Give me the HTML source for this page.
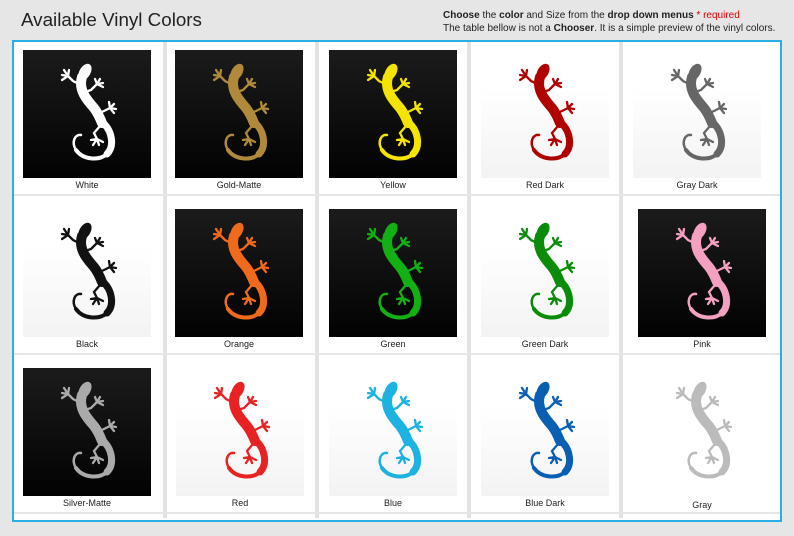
<!DOCTYPE html>
<html><head><meta charset="utf-8"><style>
body{margin:0;width:794px;height:536px;background:#e6e6e6;font-family:"Liberation Sans",sans-serif;position:relative;overflow:hidden}
.t{position:absolute;left:21px;top:9px;font-size:18.8px;color:#222}
.r{position:absolute;left:443px;top:9px;font-size:10px;color:#222;line-height:13px}
.box{position:absolute;left:12px;top:40px;width:766px;height:478px;border:2px solid #2aaee3;background:#fff}
.vs{position:absolute;top:42px;width:4px;height:476px;background:#e2e2e2}
.hs{position:absolute;left:14px;width:766px;height:2px;background:#e6e6e6}
.tile{position:absolute;width:128px;height:128px}
.d{background:linear-gradient(#1b1b1b,#020202)}
.l{background:linear-gradient(#fff 30%,#f3f3f3)}
.lb{position:absolute;width:128px;text-align:center;font-size:9px;color:#222}
</style></head><body>
<svg width="0" height="0" style="position:absolute"><defs>
<g id="g">
<ellipse cx="62" cy="22" rx="5" ry="8.5" transform="rotate(30 62 22)"/>
<g fill="none" stroke-linecap="round">
<path d="M59 27 C55 40 64 50 71 58 C75 63 77 68 79 73" stroke-width="10"/>
<path d="M79 72 C89 80 92 96 84 104" stroke-width="7"/>
<path d="M84 104 C76 111 60 110 53 100" stroke-width="4"/>
<path d="M53 100 C48 92 52 84 58 85" stroke-width="2.5"/>
<g stroke-width="2.3">
<path d="M56 34 L50 31 L45 26"/><path d="M45 26 L39 25 M45 26 L41 20 M45 26 L46 20 M45 26 L39 30"/>
<path d="M62 42 L68 40 L74 34"/><path d="M74 34 L72 29 M74 34 L77 29 M74 34 L80 33 M74 34 L80 37"/>
<path d="M74 64 L81 61 L87 58"/><path d="M87 58 L86 52 M87 58 L91 54 M87 58 L93 59 M87 58 L91 63"/>
<path d="M77 76 L71 83 L74 89"/><path d="M74 89 L68 90 M74 89 L70 95 M74 89 L76 95 M74 89 L80 92"/>
</g></g></g></defs></svg>
<div class="t">Available Vinyl Colors</div>
<div class="r"><b>Choose</b> the <b>color</b> and Size from the <b>drop down menus</b> <span style="color:#d00">* required</span><br>The table bellow is not a <b>Chooser</b>. It is a simple preview of the vinyl colors.</div>
<div class="box"></div>
<div class="vs" style="left:163px"></div><div class="vs" style="left:315px"></div><div class="vs" style="left:467px"></div><div class="vs" style="left:619px"></div>
<div class="hs" style="top:194px"></div><div class="hs" style="top:353px"></div><div class="hs" style="top:512px"></div>

<div class="tile d" style="left:23px;top:50px"><svg width="128" height="128" fill="#fff" stroke="#fff"><use href="#g"/></svg></div>
<div class="lb" style="left:23px;top:180px">White</div>
<div class="tile d" style="left:175px;top:50px"><svg width="128" height="128" fill="#b08a3a" stroke="#b08a3a"><use href="#g"/></svg></div>
<div class="lb" style="left:175px;top:180px">Gold-Matte</div>
<div class="tile d" style="left:329px;top:50px"><svg width="128" height="128" fill="#f5e400" stroke="#f5e400"><use href="#g"/></svg></div>
<div class="lb" style="left:329px;top:180px">Yellow</div>
<div class="tile l" style="left:481px;top:50px"><svg width="128" height="128" fill="#b00000" stroke="#b00000"><use href="#g"/></svg></div>
<div class="lb" style="left:481px;top:180px">Red Dark</div>
<div class="tile l" style="left:633px;top:50px"><svg width="128" height="128" fill="#666" stroke="#666"><use href="#g"/></svg></div>
<div class="lb" style="left:633px;top:180px">Gray Dark</div>

<div class="tile l" style="left:23px;top:209px"><svg width="128" height="128" fill="#111" stroke="#111"><use href="#g"/></svg></div>
<div class="lb" style="left:23px;top:339px">Black</div>
<div class="tile d" style="left:175px;top:209px"><svg width="128" height="128" fill="#f06a1c" stroke="#f06a1c"><use href="#g"/></svg></div>
<div class="lb" style="left:175px;top:339px">Orange</div>
<div class="tile d" style="left:329px;top:209px"><svg width="128" height="128" fill="#12b012" stroke="#12b012"><use href="#g"/></svg></div>
<div class="lb" style="left:329px;top:339px">Green</div>
<div class="tile l" style="left:481px;top:209px"><svg width="128" height="128" fill="#0a8c0a" stroke="#0a8c0a"><use href="#g"/></svg></div>
<div class="lb" style="left:481px;top:339px">Green Dark</div>
<div class="tile d" style="left:638px;top:209px"><svg width="128" height="128" fill="#f4a0c0" stroke="#f4a0c0"><use href="#g"/></svg></div>
<div class="lb" style="left:638px;top:339px">Pink</div>

<div class="tile d" style="left:23px;top:368px"><svg width="128" height="128" fill="#aaa" stroke="#aaa"><use href="#g"/></svg></div>
<div class="lb" style="left:23px;top:498px">Silver-Matte</div>
<div class="tile l" style="left:176px;top:368px"><svg width="128" height="128" fill="#e82222" stroke="#e82222"><use href="#g"/></svg></div>
<div class="lb" style="left:176px;top:498px">Red</div>
<div class="tile l" style="left:329px;top:368px"><svg width="128" height="128" fill="#1cb2e2" stroke="#1cb2e2"><use href="#g"/></svg></div>
<div class="lb" style="left:329px;top:498px">Blue</div>
<div class="tile l" style="left:481px;top:368px"><svg width="128" height="128" fill="#0a5fb2" stroke="#0a5fb2"><use href="#g"/></svg></div>
<div class="lb" style="left:481px;top:498px">Blue Dark</div>
<div class="tile" style="left:638px;top:368px;background:#fff"><svg width="128" height="128" fill="#bbb" stroke="#bbb"><use href="#g"/></svg></div>
<div class="lb" style="left:638px;top:500px">Gray</div>
</body></html>
